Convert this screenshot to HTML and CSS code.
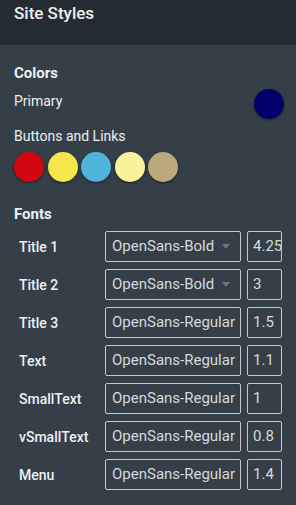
FILE: index.html
```html
<!DOCTYPE html>
<html lang="en">
<head>
  <meta charset="UTF-8">
  <title>Site Styles</title>
  <link rel="stylesheet" href="styles.css">
</head>
<body>
  <div class="header">
    <h1>Site Styles</h1>
  </div>

  <div class="content">
    <h2>Colors</h2>
    <div class="primary-row">
      <span class="label">Primary</span>
      <span class="swatch" style="background-color: #00006b"></span>
    </div>
    <div class="label">Buttons and Links</div>
    <div class="swatches">
      <span class="swatch" style="background-color: #d2070f"></span>
      <span class="swatch" style="background-color: #f6e64a"></span>
      <span class="swatch" style="background-color: #50b4da"></span>
      <span class="swatch" style="background-color: #f9f19c"></span>
      <span class="swatch" style="background-color: #b9a97c"></span>
    </div>

    <h2 class="fonts-title">Fonts</h2>
    <div class="font-rows">
      <div class="font-row">
        <span class="font-name">Title 1</span>
        <div class="select">OpenSans-Bold <span class="arrow"></span></div>
        <div class="size">4.25</div>
      </div>
      <div class="font-row">
        <span class="font-name">Title 2</span>
        <div class="select">OpenSans-Bold <span class="arrow"></span></div>
        <div class="size">3</div>
      </div>
      <div class="font-row">
        <span class="font-name">Title 3</span>
        <div class="select">OpenSans-Regular</div>
        <div class="size">1.5</div>
      </div>
      <div class="font-row">
        <span class="font-name">Text</span>
        <div class="select">OpenSans-Regular</div>
        <div class="size">1.1</div>
      </div>
      <div class="font-row">
        <span class="font-name">SmallText</span>
        <div class="select">OpenSans-Regular</div>
        <div class="size">1</div>
      </div>
      <div class="font-row">
        <span class="font-name">vSmallText</span>
        <div class="select">OpenSans-Regular</div>
        <div class="size">0.8</div>
      </div>
      <div class="font-row">
        <span class="font-name">Menu</span>
        <div class="select">OpenSans-Regular</div>
        <div class="size">1.4</div>
      </div>
    </div>
  </div>
</body>
</html>
```

FILE: styles.css
```css
body {
  margin: 0;
  font-family: Roboto, "Liberation Sans", sans-serif;
  background-color: #343f48;
  color: #eef0f2;
  height: 505px;
  overflow: hidden;
}
.header {
  height: 45px;
  background-color: #242b32;
  padding: 0 14px;
}
.header h1 {
  margin: 0;
  padding-top: 2px;
  font-size: 17px;
  font-weight: 500;
  line-height: 22px;
}
.content { padding: 0 14px; }
h2 {
  margin: 19px 0 0;
  font-size: 15px;
  font-weight: 700;
  line-height: 18px;
}
.label {
  font-size: 14px;
  line-height: 16px;
}
.primary-row {
  display: flex;
  justify-content: space-between;
  margin-top: 11px;
  height: 35px;
}
.primary-row .swatch { margin-top: -4px; margin-right: -2px; }
.swatch {
  display: inline-block;
  width: 30px;
  height: 30px;
  border-radius: 50%;
  box-shadow: 0 1px 3px rgba(0, 0, 0, 0.45);
}
.swatches {
  display: flex;
  gap: 3.5px;
  margin-top: 8px;
}
.fonts-title { margin-top: 23px; }
.font-rows {
  display: flex;
  flex-direction: column;
  gap: 7px;
  margin-top: 8px;
}
.font-row {
  display: flex;
  align-items: center;
}
.font-name {
  width: 86px;
  padding-left: 5px;
  font-size: 14px;
  font-weight: 500;
}
.select, .size {
  height: 29px;
  border: 1px solid #c3c8cd;
  border-radius: 2px;
  font-size: 15px;
  line-height: 29px;
  color: #d6dadd;
  padding-left: 6px;
  overflow: hidden;
  white-space: nowrap;
  box-sizing: content-box;
}
.select {
  width: 128px;
  display: flex;
  align-items: center;
}
.size {
  width: 28px;
  margin-left: 6px;
  padding-left: 5px;
}
.arrow {
  margin-left: 8px;
  width: 0;
  height: 0;
  border-left: 4px solid transparent;
  border-right: 4px solid transparent;
  border-top: 5px solid #6c757c;
}
```
